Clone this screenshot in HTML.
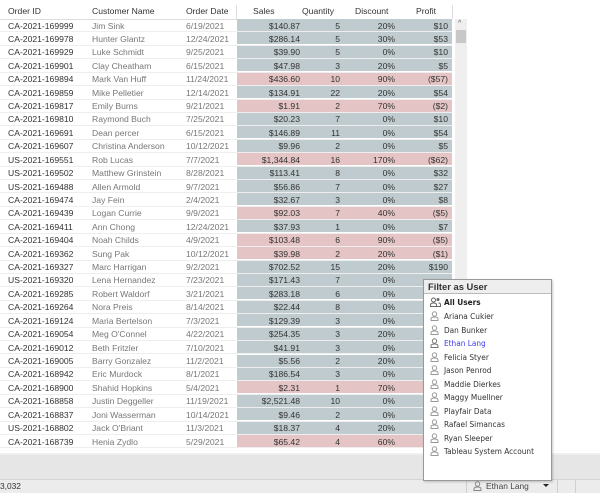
<!DOCTYPE html>
<html><head><meta charset="utf-8"><style>
*{margin:0;padding:0;box-sizing:border-box}
body{width:600px;height:493px;overflow:hidden;background:#fff;font-family:"Liberation Sans",Arial,sans-serif;font-size:8.6px;position:relative}
.h{position:absolute;top:6px;color:#333;font-size:8.6px}
.r{position:absolute;left:0;width:452px;height:13.42px;border-bottom:1.5px solid #eee}
.r span{position:absolute;top:1.5px;white-space:nowrap}
.a{left:8px;color:#333}
.b{left:92px;color:#777}
.c{left:186px;color:#777}
.m{position:absolute;left:237px;width:215px;top:0;height:12px;background:#bfcbce}
.p .m{background:#e4c4c4}
.s,.q,.d,.f{text-align:right;color:#333}
.s{right:152px}.q{right:112px}.d{right:57px}.f{right:4px}
.pop{position:absolute;left:423px;top:279px;width:129px;height:202px;background:#fff;border:1px solid #999;box-shadow:1px 1px 2px rgba(0,0,0,.2)}
.pop .t{height:14px;background:#eee;border-bottom:1px solid #bbb;font-weight:bold;font-size:9.4px;padding:1px 0 0 4px;color:#333}
.it{position:absolute;left:20px;font-size:8.2px;color:#333;font-family:"DejaVu Sans Condensed","Liberation Sans",sans-serif;font-stretch:condensed}
.ic{position:absolute;left:6px;width:9px;height:10px}
</style></head><body>
<div class="h" style="left:8px">Order ID</div>
<div class="h" style="left:92px">Customer Name</div>
<div class="h" style="left:186px">Order Date</div>
<div class="h" style="left:253px">Sales</div>
<div class="h" style="left:302px">Quantity</div>
<div class="h" style="left:355px">Discount</div>
<div class="h" style="left:416px">Profit</div>
<div style="position:absolute;left:236px;top:5px;width:1px;height:14px;background:#ddd"></div>
<div style="position:absolute;left:452px;top:5px;width:1px;height:14px;background:#ddd"></div>
<div style="position:absolute;left:0;top:18.5px;width:452px;height:1px;background:#ddd"></div>

<div style="position:absolute;left:455px;top:19px;width:12px;height:431px;background:#efefef"></div>
<div style="position:absolute;left:456px;top:30px;width:10px;height:13px;background:#c8c8c8"></div>
<div style="position:absolute;left:458px;top:20px;font-size:7px;color:#555">^</div>

<div style="position:absolute;left:0;top:19px">
<div class="r" style="top:0px"><div class="m"></div><span class="a">CA-2021-169999</span><span class="b">Jim Sink</span><span class="c">6/19/2021</span><span class="s">$140.87</span><span class="q">5</span><span class="d">20%</span><span class="f">$10</span></div>
<div class="r" style="top:13.42px"><div class="m"></div><span class="a">CA-2021-169978</span><span class="b">Hunter Glantz</span><span class="c">12/24/2021</span><span class="s">$286.14</span><span class="q">5</span><span class="d">30%</span><span class="f">$53</span></div>
<div class="r" style="top:26.84px"><div class="m"></div><span class="a">CA-2021-169929</span><span class="b">Luke Schmidt</span><span class="c">9/25/2021</span><span class="s">$39.90</span><span class="q">5</span><span class="d">0%</span><span class="f">$10</span></div>
<div class="r" style="top:40.26px"><div class="m"></div><span class="a">CA-2021-169901</span><span class="b">Clay Cheatham</span><span class="c">6/15/2021</span><span class="s">$47.98</span><span class="q">3</span><span class="d">20%</span><span class="f">$5</span></div>
<div class="r p" style="top:53.68px"><div class="m"></div><span class="a">CA-2021-169894</span><span class="b">Mark Van Huff</span><span class="c">11/24/2021</span><span class="s">$436.60</span><span class="q">10</span><span class="d">90%</span><span class="f">($57)</span></div>
<div class="r" style="top:67.1px"><div class="m"></div><span class="a">CA-2021-169859</span><span class="b">Mike Pelletier</span><span class="c">12/14/2021</span><span class="s">$134.91</span><span class="q">22</span><span class="d">20%</span><span class="f">$54</span></div>
<div class="r p" style="top:80.52px"><div class="m"></div><span class="a">CA-2021-169817</span><span class="b">Emily Burns</span><span class="c">9/21/2021</span><span class="s">$1.91</span><span class="q">2</span><span class="d">70%</span><span class="f">($2)</span></div>
<div class="r" style="top:93.94px"><div class="m"></div><span class="a">CA-2021-169810</span><span class="b">Raymond Buch</span><span class="c">7/25/2021</span><span class="s">$20.23</span><span class="q">7</span><span class="d">0%</span><span class="f">$10</span></div>
<div class="r" style="top:107.36px"><div class="m"></div><span class="a">CA-2021-169691</span><span class="b">Dean percer</span><span class="c">6/15/2021</span><span class="s">$146.89</span><span class="q">11</span><span class="d">0%</span><span class="f">$54</span></div>
<div class="r" style="top:120.78px"><div class="m"></div><span class="a">CA-2021-169607</span><span class="b">Christina Anderson</span><span class="c">10/12/2021</span><span class="s">$9.96</span><span class="q">2</span><span class="d">0%</span><span class="f">$5</span></div>
<div class="r p" style="top:134.2px"><div class="m"></div><span class="a">US-2021-169551</span><span class="b">Rob Lucas</span><span class="c">7/7/2021</span><span class="s">$1,344.84</span><span class="q">16</span><span class="d">170%</span><span class="f">($62)</span></div>
<div class="r" style="top:147.62px"><div class="m"></div><span class="a">US-2021-169502</span><span class="b">Matthew Grinstein</span><span class="c">8/28/2021</span><span class="s">$113.41</span><span class="q">8</span><span class="d">0%</span><span class="f">$32</span></div>
<div class="r" style="top:161.04px"><div class="m"></div><span class="a">US-2021-169488</span><span class="b">Allen Armold</span><span class="c">9/7/2021</span><span class="s">$56.86</span><span class="q">7</span><span class="d">0%</span><span class="f">$27</span></div>
<div class="r" style="top:174.46px"><div class="m"></div><span class="a">CA-2021-169474</span><span class="b">Jay Fein</span><span class="c">2/4/2021</span><span class="s">$32.67</span><span class="q">3</span><span class="d">0%</span><span class="f">$8</span></div>
<div class="r p" style="top:187.88px"><div class="m"></div><span class="a">CA-2021-169439</span><span class="b">Logan Currie</span><span class="c">9/9/2021</span><span class="s">$92.03</span><span class="q">7</span><span class="d">40%</span><span class="f">($5)</span></div>
<div class="r" style="top:201.3px"><div class="m"></div><span class="a">CA-2021-169411</span><span class="b">Ann Chong</span><span class="c">12/24/2021</span><span class="s">$37.93</span><span class="q">1</span><span class="d">0%</span><span class="f">$7</span></div>
<div class="r p" style="top:214.72px"><div class="m"></div><span class="a">CA-2021-169404</span><span class="b">Noah Childs</span><span class="c">4/9/2021</span><span class="s">$103.48</span><span class="q">6</span><span class="d">90%</span><span class="f">($5)</span></div>
<div class="r p" style="top:228.14px"><div class="m"></div><span class="a">CA-2021-169362</span><span class="b">Sung Pak</span><span class="c">10/12/2021</span><span class="s">$39.98</span><span class="q">2</span><span class="d">20%</span><span class="f">($1)</span></div>
<div class="r" style="top:241.56px"><div class="m"></div><span class="a">CA-2021-169327</span><span class="b">Marc Harrigan</span><span class="c">9/2/2021</span><span class="s">$702.52</span><span class="q">15</span><span class="d">20%</span><span class="f">$190</span></div>
<div class="r" style="top:254.98px"><div class="m"></div><span class="a">US-2021-169320</span><span class="b">Lena Hernandez</span><span class="c">7/23/2021</span><span class="s">$171.43</span><span class="q">7</span><span class="d">0%</span><span class="f"></span></div>
<div class="r" style="top:268.4px"><div class="m"></div><span class="a">CA-2021-169285</span><span class="b">Robert Waldorf</span><span class="c">3/21/2021</span><span class="s">$283.18</span><span class="q">6</span><span class="d">0%</span><span class="f"></span></div>
<div class="r" style="top:281.82px"><div class="m"></div><span class="a">CA-2021-169264</span><span class="b">Nora Preis</span><span class="c">8/14/2021</span><span class="s">$22.44</span><span class="q">8</span><span class="d">0%</span><span class="f"></span></div>
<div class="r" style="top:295.24px"><div class="m"></div><span class="a">CA-2021-169124</span><span class="b">Maria Bertelson</span><span class="c">7/3/2021</span><span class="s">$129.39</span><span class="q">3</span><span class="d">0%</span><span class="f"></span></div>
<div class="r" style="top:308.66px"><div class="m"></div><span class="a">CA-2021-169054</span><span class="b">Meg O'Connel</span><span class="c">4/22/2021</span><span class="s">$254.35</span><span class="q">3</span><span class="d">20%</span><span class="f"></span></div>
<div class="r" style="top:322.08px"><div class="m"></div><span class="a">CA-2021-169012</span><span class="b">Beth Fritzler</span><span class="c">7/10/2021</span><span class="s">$41.91</span><span class="q">3</span><span class="d">0%</span><span class="f"></span></div>
<div class="r" style="top:335.5px"><div class="m"></div><span class="a">CA-2021-169005</span><span class="b">Barry Gonzalez</span><span class="c">11/2/2021</span><span class="s">$5.56</span><span class="q">2</span><span class="d">20%</span><span class="f"></span></div>
<div class="r" style="top:348.92px"><div class="m"></div><span class="a">CA-2021-168942</span><span class="b">Eric Murdock</span><span class="c">8/1/2021</span><span class="s">$186.54</span><span class="q">3</span><span class="d">0%</span><span class="f"></span></div>
<div class="r p" style="top:362.34px"><div class="m"></div><span class="a">CA-2021-168900</span><span class="b">Shahid Hopkins</span><span class="c">5/4/2021</span><span class="s">$2.31</span><span class="q">1</span><span class="d">70%</span><span class="f"></span></div>
<div class="r" style="top:375.76px"><div class="m"></div><span class="a">CA-2021-168858</span><span class="b">Justin Deggeller</span><span class="c">11/19/2021</span><span class="s">$2,521.48</span><span class="q">10</span><span class="d">0%</span><span class="f"></span></div>
<div class="r" style="top:389.18px"><div class="m"></div><span class="a">CA-2021-168837</span><span class="b">Joni Wasserman</span><span class="c">10/14/2021</span><span class="s">$9.46</span><span class="q">2</span><span class="d">0%</span><span class="f"></span></div>
<div class="r" style="top:402.6px"><div class="m"></div><span class="a">US-2021-168802</span><span class="b">Jack O'Briant</span><span class="c">11/3/2021</span><span class="s">$18.37</span><span class="q">4</span><span class="d">20%</span><span class="f"></span></div>
<div class="r p" style="top:416.02px"><div class="m"></div><span class="a">CA-2021-168739</span><span class="b">Henia Zydlo</span><span class="c">5/29/2021</span><span class="s">$65.42</span><span class="q">4</span><span class="d">60%</span><span class="f"></span></div>
</div>

<div style="position:absolute;left:0;top:453px;width:600px;height:40px;background:#e6e6e6;border-top:2px solid #f0f0f0"></div>
<div style="position:absolute;left:0;top:479px;width:600px;height:14px;background:#ececec;border-top:1px solid #d4d4d4"></div>
<div style="position:absolute;left:0;top:481px;font-size:8.4px;color:#333">3,032</div>
<div style="position:absolute;left:466px;top:479px;width:1px;height:14px;background:#d0d0d0"></div>
<div style="position:absolute;left:557px;top:479px;width:1px;height:14px;background:#d0d0d0"></div>
<div style="position:absolute;left:575px;top:479px;width:1px;height:14px;background:#d0d0d0"></div>
<svg style="position:absolute;left:473px;top:481px" width="9" height="10" viewBox="0 0 9 10"><circle cx="4.5" cy="3" r="2.2" fill="none" stroke="#888" stroke-width="1"/><path d="M1 9.5V8q0-2 3.5-2T8 8v1.5z" fill="none" stroke="#888" stroke-width="1"/></svg>
<div style="position:absolute;left:486px;top:481px;font-size:8.4px;color:#444">Ethan Lang</div>
<div style="position:absolute;left:543px;top:484px;width:0;height:0;border-left:3px solid transparent;border-right:3px solid transparent;border-top:3px solid #222"></div>

<div class="pop"><div class="t">Filter as User</div>
<svg class="ic" style="top:17px;width:11px" viewBox="0 0 11 10"><circle cx="3.5" cy="3" r="2" fill="none" stroke="#666"/><path d="M.5 9.5V8q0-2 3-2t3 2v1.5z" fill="none" stroke="#666"/><circle cx="8" cy="2.5" r="1.5" fill="#666"/><path d="M6.5 9.5h4V7.5q0-1.5-2-1.5" fill="none" stroke="#666"/></svg>
<div class="it" style="top:17px;font-weight:bold;color:#222">All Users</div>
<svg class="ic" style="top:31px" viewBox="0 0 9 10"><circle cx="4.5" cy="3" r="2.2" fill="none" stroke="#999"/><path d="M1 9.5V8q0-2 3.5-2T8 8v1.5z" fill="none" stroke="#999"/></svg><div class="it" style="top:31px">Ariana Cukier</div>
<svg class="ic" style="top:44.5px" viewBox="0 0 9 10"><circle cx="4.5" cy="3" r="2.2" fill="none" stroke="#999"/><path d="M1 9.5V8q0-2 3.5-2T8 8v1.5z" fill="none" stroke="#999"/></svg><div class="it" style="top:44.5px">Dan Bunker</div>
<svg class="ic" style="top:58px" viewBox="0 0 9 10"><circle cx="4.5" cy="3" r="2.2" fill="none" stroke="#777"/><path d="M1 9.5V8q0-2 3.5-2T8 8v1.5z" fill="none" stroke="#777"/></svg><div class="it" style="top:58px;color:#3a3af0">Ethan Lang</div>
<svg class="ic" style="top:71.5px" viewBox="0 0 9 10"><circle cx="4.5" cy="3" r="2.2" fill="none" stroke="#999"/><path d="M1 9.5V8q0-2 3.5-2T8 8v1.5z" fill="none" stroke="#999"/></svg><div class="it" style="top:71.5px">Felicia Styer</div>
<svg class="ic" style="top:85px" viewBox="0 0 9 10"><circle cx="4.5" cy="3" r="2.2" fill="none" stroke="#999"/><path d="M1 9.5V8q0-2 3.5-2T8 8v1.5z" fill="none" stroke="#999"/></svg><div class="it" style="top:85px">Jason Penrod</div>
<svg class="ic" style="top:98.5px" viewBox="0 0 9 10"><circle cx="4.5" cy="3" r="2.2" fill="none" stroke="#999"/><path d="M1 9.5V8q0-2 3.5-2T8 8v1.5z" fill="none" stroke="#999"/></svg><div class="it" style="top:98.5px">Maddie Dierkes</div>
<svg class="ic" style="top:112px" viewBox="0 0 9 10"><circle cx="4.5" cy="3" r="2.2" fill="none" stroke="#999"/><path d="M1 9.5V8q0-2 3.5-2T8 8v1.5z" fill="none" stroke="#999"/></svg><div class="it" style="top:112px">Maggy Muellner</div>
<svg class="ic" style="top:125.5px" viewBox="0 0 9 10"><circle cx="4.5" cy="3" r="2.2" fill="none" stroke="#999"/><path d="M1 9.5V8q0-2 3.5-2T8 8v1.5z" fill="none" stroke="#999"/></svg><div class="it" style="top:125.5px">Playfair Data</div>
<svg class="ic" style="top:139px" viewBox="0 0 9 10"><circle cx="4.5" cy="3" r="2.2" fill="none" stroke="#999"/><path d="M1 9.5V8q0-2 3.5-2T8 8v1.5z" fill="none" stroke="#999"/></svg><div class="it" style="top:139px">Rafael Simancas</div>
<svg class="ic" style="top:152.5px" viewBox="0 0 9 10"><circle cx="4.5" cy="3" r="2.2" fill="none" stroke="#999"/><path d="M1 9.5V8q0-2 3.5-2T8 8v1.5z" fill="none" stroke="#999"/></svg><div class="it" style="top:152.5px">Ryan Sleeper</div>
<svg class="ic" style="top:166px" viewBox="0 0 9 10"><circle cx="4.5" cy="3" r="2.2" fill="none" stroke="#999"/><path d="M1 9.5V8q0-2 3.5-2T8 8v1.5z" fill="none" stroke="#999"/></svg><div class="it" style="top:166px">Tableau System Account</div>
</div>
</body></html>
